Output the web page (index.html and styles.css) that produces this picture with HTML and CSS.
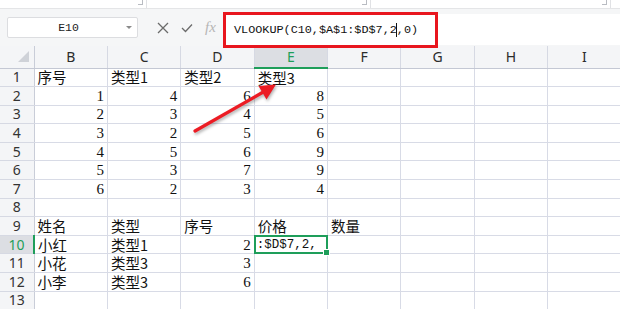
FILE: index.html
```html
<!DOCTYPE html>
<html lang="zh-CN">
<head>
    <meta charset="UTF-8">
    <title>VLOOKUP</title>
    <link rel="stylesheet" href="styles.css">
</head>
<body>

<div class="ribbon">
    <span class="mark mark-1"></span>
    <span class="mark mark-2"></span>
    <span class="mark mark-3"></span>
</div>

<div class="formula-bar">
    <div class="name-box">
        <span class="name-text">E10</span>
        <span class="caret"></span>
    </div>
    <div class="fb-icons">
        <svg width="14" height="14" viewBox="0 0 14 14"><path d="M2 2 L12 12 M12 2 L2 12" stroke="#6b6b6b" stroke-width="1.3" fill="none"/></svg>
        <svg width="14" height="14" viewBox="0 0 14 14"><path d="M2 7 L5.5 10.5 L12 3.5" stroke="#6b6b6b" stroke-width="1.3" fill="none"/></svg>
        <span class="fx">fx</span>
    </div>
    <div class="formula-input">VLOOKUP(C10,$A$1:$D$7,2<span class="cursor"></span>,0)</div>
</div>

<div class="note-box"></div>

<table class="sheet">
    <colgroup>
        <col class="col-rh">
        <col class="col"><col class="col"><col class="col"><col class="col">
        <col class="col"><col class="col"><col class="col"><col class="col">
    </colgroup>
    <tr class="head">
        <th class="corner"><span class="tri"></span></th>
        <th>B</th><th>C</th><th>D</th><th class="sel">E</th><th>F</th><th>G</th><th>H</th><th>I</th>
    </tr>
    <tr><th>1</th><td>序号</td><td>类型1</td><td>类型2</td><td>类型3</td><td></td><td></td><td></td><td></td></tr>
    <tr><th>2</th><td class="num">1</td><td class="num">4</td><td class="num">6</td><td class="num">8</td><td></td><td></td><td></td><td></td></tr>
    <tr><th>3</th><td class="num">2</td><td class="num">3</td><td class="num">4</td><td class="num">5</td><td></td><td></td><td></td><td></td></tr>
    <tr><th>4</th><td class="num">3</td><td class="num">2</td><td class="num">5</td><td class="num">6</td><td></td><td></td><td></td><td></td></tr>
    <tr><th>5</th><td class="num">4</td><td class="num">5</td><td class="num">6</td><td class="num">9</td><td></td><td></td><td></td><td></td></tr>
    <tr><th>6</th><td class="num">5</td><td class="num">3</td><td class="num">7</td><td class="num">9</td><td></td><td></td><td></td><td></td></tr>
    <tr><th>7</th><td class="num">6</td><td class="num">2</td><td class="num">3</td><td class="num">4</td><td></td><td></td><td></td><td></td></tr>
    <tr><th>8</th><td></td><td></td><td></td><td></td><td></td><td></td><td></td><td></td></tr>
    <tr><th>9</th><td>姓名</td><td>类型</td><td>序号</td><td>价格</td><td>数量</td><td></td><td></td><td></td></tr>
    <tr><th class="sel-row">10</th><td>小红</td><td>类型1</td><td class="num">2</td><td class="active">:$D$7,2,</td><td></td><td></td><td></td><td></td></tr>
    <tr><th>11</th><td>小花</td><td>类型3</td><td class="num">3</td><td></td><td></td><td></td><td></td><td></td></tr>
    <tr><th>12</th><td>小李</td><td>类型3</td><td class="num">6</td><td></td><td></td><td></td><td></td><td></td></tr>
    <tr><th>13</th><td></td><td></td><td></td><td></td><td></td><td></td><td></td><td></td></tr>
</table>

<svg class="arrow" width="620" height="309" viewBox="0 0 620 309">
    <path d="M195 131 L265 91" stroke="#ec1c24" stroke-width="3.2" stroke-linecap="round" fill="none"/>
    <path d="M276 84.5 L258.5 86 L266.5 99.5 Z" fill="#ec1c24"/>
</svg>

</body>
</html>
```

FILE: styles.css
```css
body {
    margin: 0;
    width: 620px;
    height: 309px;
    overflow: hidden;
    background-color: #fff;
    font-family: "Noto Sans", "Noto Sans CJK SC", sans-serif;
    position: relative;
}
.ribbon {
    height: 8px;
    background-color: #fff;
    border-bottom: 1px solid #e4e5e7;
    position: relative;
}
.mark {
    position: absolute;
    top: 0;
    width: 4px;
    height: 4px;
    border-right: 1px solid #b9bcc2;
    border-bottom: 1px solid #b9bcc2;
}
.mark::after {
    content: "";
    position: absolute;
    left: 8px;
    top: 0;
    width: 1px;
    height: 8px;
    background-color: #e1e2e5;
}
.mark-1 { left: 138px; }
.mark-2 { left: 362px; }
.mark-3 { left: 602px; }

.formula-bar {
    height: 37px;
    background-color: #f5f6f7;
    display: flex;
    align-items: center;
}
.name-box {
    margin-left: 7px;
    width: 131px;
    height: 21px;
    box-sizing: border-box;
    background-color: #fff;
    border: 1px solid #dcdde0;
    border-radius: 2px;
    display: flex;
    align-items: center;
    position: relative;
}
.name-text {
    flex: 1;
    text-align: center;
    font-family: "Liberation Mono", monospace;
    font-size: 11.5px;
    color: #222;
    padding-right: 8px;
}
.caret {
    position: absolute;
    right: 5px;
    top: 8px;
    border-left: 3px solid transparent;
    border-right: 3px solid transparent;
    border-top: 3px solid #8a8a8a;
}
.fb-icons {
    width: 85px;
    display: flex;
    align-items: center;
    padding-left: 18px;
    gap: 10px;
    box-sizing: border-box;
}
.fx {
    font-family: "Liberation Serif", serif;
    font-style: italic;
    font-size: 15px;
    color: #b5b5b5;
    margin-left: 1px;
}
.formula-input {
    flex: 1;
    height: 31px;
    margin-top: 4px;
    background-color: #fff;
    padding-left: 11px;
    display: flex;
    align-items: center;
    font-family: "Liberation Mono", monospace;
    font-size: 11.8px;
    color: #111;
    white-space: pre;
}
.cursor {
    display: inline-block;
    width: 1px;
    height: 14px;
    background-color: #111;
    margin: 0 0 0 -1px;
}
.note-box {
    position: absolute;
    left: 223px;
    top: 12px;
    width: 215px;
    height: 36px;
    box-sizing: border-box;
    border: 3px solid #e8161e;
}

.sheet {
    border-collapse: collapse;
    table-layout: fixed;
    width: 621.2px;
}
.col-rh { width: 34px; }
.col { width: 73.4px; }
.sheet tr { height: 18.6px; }
.sheet tr.head { height: 22px; }
.sheet th {
    background-color: #f4f5f7;
    font-weight: normal;
    font-size: 14px;
    color: #333;
    text-align: center;
    padding: 0;
    border: 1px solid #d6d9e3;
    border-top: none;
    line-height: 16px;
}
.sheet tr.head th {
    border-bottom: 1px solid #c4c8d4;
    color: #2b2b2b;
}
.sheet th:first-child {
    border-left: none;
    border-right: 1px solid #c9cdd8;
}
.sheet td {
    border: 1px solid #d8dbe6;
    padding: 0 3px 0 3px;
    font-family: "Noto Sans CJK SC", sans-serif;
    font-size: 14.5px;
    line-height: 16px;
    color: #111;
    white-space: nowrap;
    overflow: visible;
}
.sheet td.num {
    text-align: right;
    font-family: "Liberation Serif", serif;
    font-size: 15px;
}
.corner {
    position: relative;
}
.tri {
    position: absolute;
    left: 18px;
    top: 5px;
    width: 0;
    height: 0;
    border-left: 11px solid transparent;
    border-bottom: 11px solid #cfd2d8;
}
.sheet tr.head th.sel {
    background-color: #dcdee3;
    color: #1e9e5a;
    border-bottom: 2px solid #1e9e5a;
}
.sheet th.sel-row {
    background-color: #dcdee3;
    color: #1e9e5a;
    border-right: 2px solid #1e9e5a;
}
.sheet td.active {
    position: relative;
    font-family: "Liberation Mono", monospace;
    font-size: 12.5px;
    padding-left: 2px;
}
.active::after {
    content: "";
    position: absolute;
    left: -1px;
    top: -1px;
    right: -1px;
    bottom: -1px;
    border: 2px solid #1e9e5a;
}
.active::before {
    content: "";
    position: absolute;
    right: -3px;
    bottom: -3px;
    width: 5px;
    height: 5px;
    background-color: #1e9e5a;
    border: 1px solid #fff;
    z-index: 1;
}
.arrow {
    position: absolute;
    left: 0;
    top: 0;
    pointer-events: none;
    filter: drop-shadow(1px 2px 1.5px rgba(0, 0, 0, 0.3));
}
```
